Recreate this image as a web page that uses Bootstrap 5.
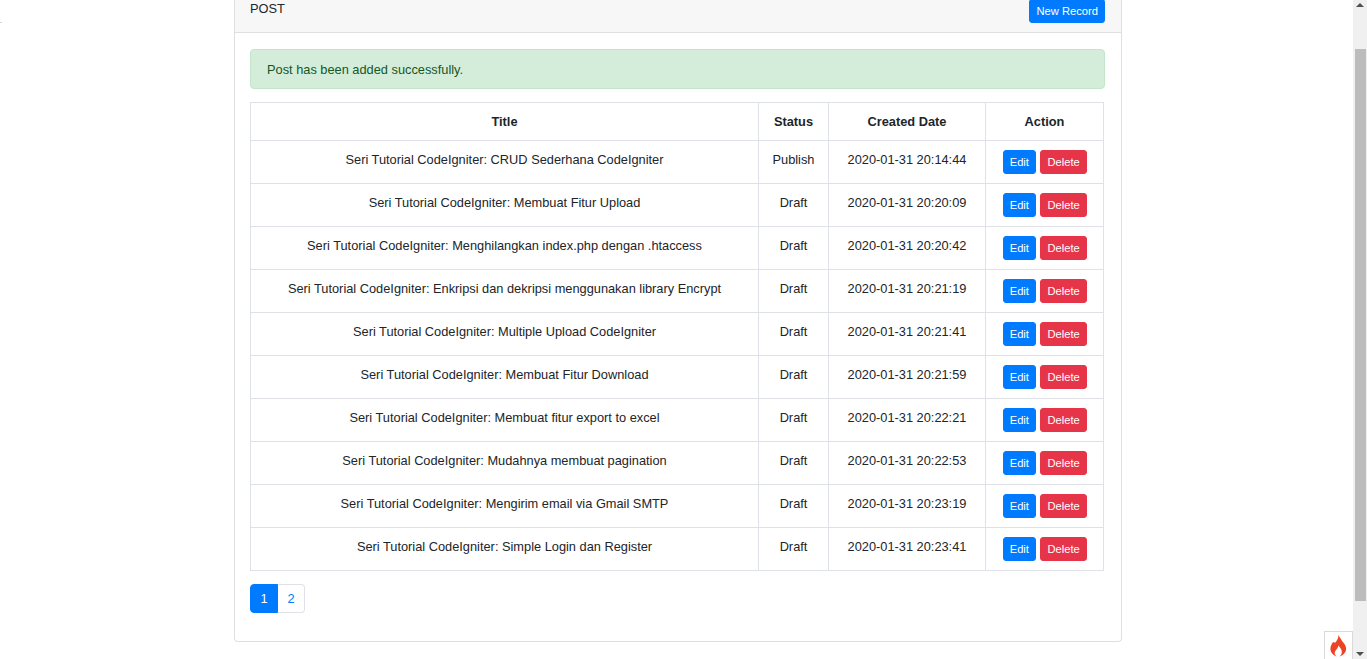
<!DOCTYPE html>
<html lang="en">
<head>
<meta charset="utf-8">
<title>Post</title>
<link href="https://cdn.jsdelivr.net/npm/bootstrap@5.3.0/dist/css/bootstrap.min.css" rel="stylesheet">
<style>
html,body{height:100%;overflow:hidden}
body{font-family:"Liberation Sans",Arial,sans-serif;font-size:12.8px;color:#212529;line-height:1.5;background:#fff}
.page-shell{height:659px}
.page-main{width:1353px;min-width:0;position:relative}
.edge-mark{position:absolute;left:0;top:22px;width:2px;height:1px;background:#d5d5d5}
.post-card{width:888px;margin:0 0 0 234px;border:1px solid #dfdfdf;border-top:0;border-radius:0 0 4px 4px;height:642px}
.post-head{height:33px;padding:0 16px 0 15px;background:#f7f7f7;border-bottom:1px solid #dfdfdf}
.post-title{line-height:17px}
.post-body{padding:16px 16px 0 15px}
.btn-new{background:#007bff;color:#fff;font-size:11.2px;line-height:17px;padding:3px 6px;border:1px solid #007bff;border-radius:3px;height:24px;margin-top:-1px}
.notice{background:#d4edda;border:1px solid #c3e6cb;color:#155724;height:40px;padding:1px 16px 0;border-radius:4px;margin-bottom:13px;display:flex;align-items:center}
.post-table{width:853px;margin:0;border-collapse:collapse;table-layout:fixed;color:#212529}
.post-table th,.post-table td{border:1px solid #dee2e6;text-align:center;padding:0;background:#fff}
.post-table th{height:38px;font-weight:700;vertical-align:middle}
.post-table td{height:43px;padding-bottom:4px;vertical-align:middle}
.post-table td.acts{padding:0 0 0 1px;vertical-align:middle}
.act-btn{font-size:11.2px;line-height:17px;padding:3px 6px;border-radius:3px;color:#fff;height:24px;display:inline-block;border:1px solid transparent}
.act-edit{background:#007bff;border-color:#007bff}
.act-del{background:#e63549;border-color:#e63549;margin-left:4px;padding:3px 6.5px}
.pager{margin:13px 0 0;padding:0;list-style:none}
.pager a{display:block;height:29px;line-height:27px;text-align:center;text-decoration:none;font-size:12.8px}
.pg-on{width:28px;background:#007bff;color:#fff;border:1px solid #007bff;border-radius:4px 0 0 4px}
.pg-off{width:27px;background:#fff;color:#007bff;border:1px solid #dee2e6;border-left:0;border-radius:0 4px 4px 0}
.fake-bar{width:14px;flex:none;background:#f0f0f0;position:relative}
.bar-thumb{position:absolute;left:2px;right:1px;top:49px;height:552px;background:#bcbcbc}
.arrow-up,.arrow-down{position:absolute;left:3px;width:0;height:0;border-left:4px solid transparent;border-right:4px solid transparent}
.arrow-up{top:3px;border-bottom:4px solid #505050}
.arrow-down{bottom:3px;border-top:4px solid #505050}
.ci-tab{position:absolute;right:0;bottom:0;width:29px;height:28px;background:#fff;border:1px solid #d9d9d9;border-bottom:0;display:flex;align-items:center;justify-content:center}
</style>
</head>
<body>
<div class="page-shell d-flex">
  <div class="page-main">
    <div class="edge-mark"></div>
    <div class="post-card">
      <div class="post-head d-flex justify-content-between">
        <div class="post-title">POST</div>
        <a class="btn-new text-decoration-none" href="#">New Record</a>
      </div>
      <div class="post-body">
        <div class="notice" role="alert">Post has been added successfully.</div>
        <table class="post-table">
          <colgroup><col style="width:508px"><col style="width:70px"><col style="width:157px"><col style="width:118px"></colgroup>
          <thead><tr><th>Title</th><th>Status</th><th>Created Date</th><th>Action</th></tr></thead>
          <tbody>
            <tr><td>Seri Tutorial CodeIgniter: CRUD Sederhana CodeIgniter</td><td>Publish</td><td>2020-01-31 20:14:44</td><td class="acts"><a class="act-btn act-edit text-decoration-none" href="#">Edit</a><a class="act-btn act-del text-decoration-none" href="#">Delete</a></td></tr>
            <tr><td>Seri Tutorial CodeIgniter: Membuat Fitur Upload</td><td>Draft</td><td>2020-01-31 20:20:09</td><td class="acts"><a class="act-btn act-edit text-decoration-none" href="#">Edit</a><a class="act-btn act-del text-decoration-none" href="#">Delete</a></td></tr>
            <tr><td>Seri Tutorial CodeIgniter: Menghilangkan index.php dengan .htaccess</td><td>Draft</td><td>2020-01-31 20:20:42</td><td class="acts"><a class="act-btn act-edit text-decoration-none" href="#">Edit</a><a class="act-btn act-del text-decoration-none" href="#">Delete</a></td></tr>
            <tr><td>Seri Tutorial CodeIgniter: Enkripsi dan dekripsi menggunakan library Encrypt</td><td>Draft</td><td>2020-01-31 20:21:19</td><td class="acts"><a class="act-btn act-edit text-decoration-none" href="#">Edit</a><a class="act-btn act-del text-decoration-none" href="#">Delete</a></td></tr>
            <tr><td>Seri Tutorial CodeIgniter: Multiple Upload CodeIgniter</td><td>Draft</td><td>2020-01-31 20:21:41</td><td class="acts"><a class="act-btn act-edit text-decoration-none" href="#">Edit</a><a class="act-btn act-del text-decoration-none" href="#">Delete</a></td></tr>
            <tr><td>Seri Tutorial CodeIgniter: Membuat Fitur Download</td><td>Draft</td><td>2020-01-31 20:21:59</td><td class="acts"><a class="act-btn act-edit text-decoration-none" href="#">Edit</a><a class="act-btn act-del text-decoration-none" href="#">Delete</a></td></tr>
            <tr><td>Seri Tutorial CodeIgniter: Membuat fitur export to excel</td><td>Draft</td><td>2020-01-31 20:22:21</td><td class="acts"><a class="act-btn act-edit text-decoration-none" href="#">Edit</a><a class="act-btn act-del text-decoration-none" href="#">Delete</a></td></tr>
            <tr><td>Seri Tutorial CodeIgniter: Mudahnya membuat pagination</td><td>Draft</td><td>2020-01-31 20:22:53</td><td class="acts"><a class="act-btn act-edit text-decoration-none" href="#">Edit</a><a class="act-btn act-del text-decoration-none" href="#">Delete</a></td></tr>
            <tr><td>Seri Tutorial CodeIgniter: Mengirim email via Gmail SMTP</td><td>Draft</td><td>2020-01-31 20:23:19</td><td class="acts"><a class="act-btn act-edit text-decoration-none" href="#">Edit</a><a class="act-btn act-del text-decoration-none" href="#">Delete</a></td></tr>
            <tr><td>Seri Tutorial CodeIgniter: Simple Login dan Register</td><td>Draft</td><td>2020-01-31 20:23:41</td><td class="acts"><a class="act-btn act-edit text-decoration-none" href="#">Edit</a><a class="act-btn act-del text-decoration-none" href="#">Delete</a></td></tr>
          </tbody>
        </table>
        <ul class="pager d-flex">
          <li><a class="pg-on" href="#">1</a></li>
          <li><a class="pg-off" href="#">2</a></li>
        </ul>
      </div>
    </div>
    <div class="ci-tab">
      <svg width="19" height="23" viewBox="0 0 20 24"><path fill="#ee4323" d="M9.500 1C10.500 4 8.500 6 7.500 8 6.500 9.500 5 9 4.500 8 3 10 1.500 12.500 1.500 15.500 1.500 19.500 4.500 22.500 8 23.500 6 22 5.500 20 6.500 18 7.500 16 9.500 15 10 12 11.500 14 13.500 16 13.500 18.500 13.500 20.500 12.500 22.500 11 23.500 15 22.500 18 19.500 18 15.500 18 11 14.500 9 13 6 12 4 10.500 2.500 9.500 1Z"/></svg>
    </div>
  </div>
  <div class="fake-bar">
    <div class="arrow-up"></div>
    <div class="bar-thumb"></div>
    <div class="arrow-down"></div>
  </div>
</div>
<script src="https://cdn.jsdelivr.net/npm/bootstrap@5.3.0/dist/js/bootstrap.bundle.min.js"></script>
</body>
</html>
